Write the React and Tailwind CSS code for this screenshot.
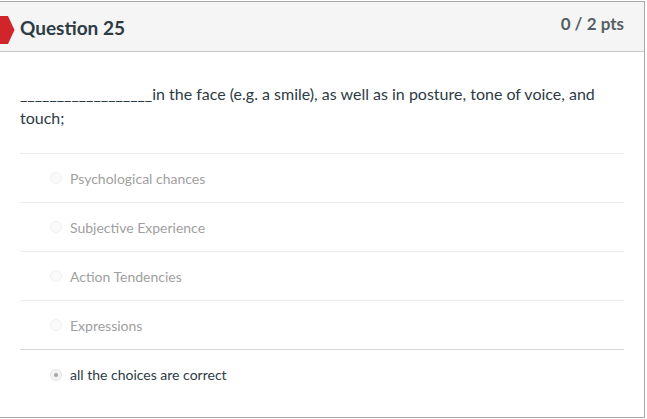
import React from "react";

function Radio({ checked }) {
  return (
    <span
      className={
        "relative inline-flex items-center justify-center w-[12px] h-[12px] rounded-full border " +
        (checked ? "border-[#e6e6e6] bg-[#f3f3f3]" : "border-[#f0f0f0] bg-[#fafafa]")
      }
    >
      {checked && <span className="w-[4px] h-[4px] rounded-full bg-[#a5a5a5]" />}
    </span>
  );
}

const options = [
  { label: "Psychological chances" },
  { label: "Subjective Experience" },
  { label: "Action Tendencies" },
  { label: "Expressions" },
];

export default function App() {
  return (
    <div className="w-[647px] h-[419px] bg-white pt-[1px]" style={{ fontFamily: "Lato, 'Noto Sans', sans-serif" }}>
      <div className="relative w-[645px] h-[417px] border-t border-r border-b border-[#a8a8a8] flex flex-col">
        <div className="h-[50px] bg-[#f5f5f5] border-b border-[#c7c7c7] flex items-center justify-between px-5">
          <svg className="absolute left-0 top-[14px]" width="15" height="28" viewBox="0 0 15 28">
            <polygon points="0,0 8,0 14.5,14 8,28 0,28" fill="#d0262b" />
          </svg>
          <span className="text-[19px] font-bold text-[#2d3b45] pt-[3px]">Question 25</span>
          <span className="text-[17px] font-bold text-[#565f66] mb-[5px]">0 / 2 pts</span>
        </div>
        <div className="px-5 flex-1 flex flex-col">
          <p className="pt-[30px] pb-[23px] text-[16px] leading-[24px] text-[#2d3b45]">
            __________________in the face (e.g. a smile), as well as in posture, tone of voice, and touch;
          </p>
          {options.map((o) => (
            <div key={o.label} className="h-[49px] border-t border-[#ececec] flex items-center pl-[30px] gap-[8px]">
              <Radio />
              <span className="text-[14px] text-[#a0a0a0]">{o.label}</span>
            </div>
          ))}
          <div className="h-[52px] pb-[2px] border-t border-[#d6d6d6] flex items-center pl-[30px] gap-[8px]">
            <Radio checked />
            <span className="text-[14px] text-[#2d3b45]">all the choices are correct</span>
          </div>
        </div>
      </div>
    </div>
  );
}
